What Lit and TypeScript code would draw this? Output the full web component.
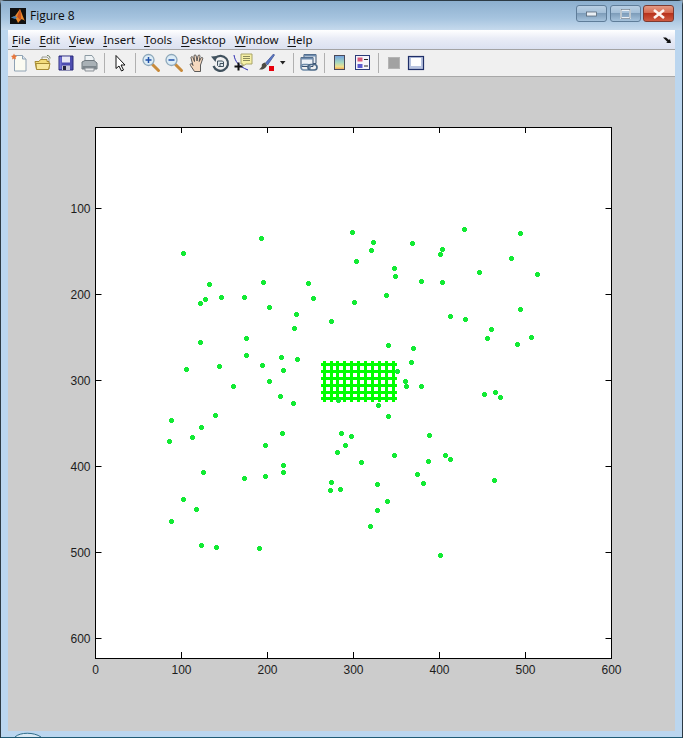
import { LitElement, html, css, svg } from "lit";
import { customElement } from "lit/decorators.js";

const A: [number, number][] = [[70,85],[304,40],[577,22],[640,52],[634,76],[589,109],[757,55],[847,73],[841,88],[703,130],[706,154],[784,169],[847,172],[913,13],[1081,25],[1054,100],[958,142],[1132,148],[148,178],[136,223],[121,235],[184,217],[253,217],[310,172],[445,175],[460,220],[328,247],[409,268],[403,310],[514,289],[583,232],[679,211],[871,274],[916,283],[1081,253],[994,313],[982,340],[1072,358],[1114,337],[121,352],[259,340],[259,391],[364,397],[412,403],[307,421],[370,436],[79,433],[178,424],[328,469],[220,484],[361,514],[685,361],[760,370],[754,412],[712,439],[736,469],[739,484],[784,484],[973,508],[1006,502],[1021,517]];
const B: [number, number][] = [[400,25],[655,31],[685,64],[535,15],[166,61],[34,76],[124,97],[97,127],[28,139],[367,115],[316,151],[544,115],[574,124],[556,151],[532,172],[604,202],[703,181],[808,121],[856,181],[871,193],[805,199],[370,211],[370,232],[316,244],[253,250],[130,232],[514,262],[511,286],[541,283],[652,268],[772,238],[790,265],[1003,256],[70,313],[109,343],[34,379],[682,319],[652,346],[631,394],[124,451],[169,457],[298,460],[841,481]];

const pts: [number, number][] = [
  ...A.map(([x, y]): [number, number] => [Math.round(x / 3 + 160), Math.round(y / 3 + 225)]),
  ...B.map(([x, y]): [number, number] => [Math.round(x / 3 + 160), Math.round(y / 3 + 395)]),
];
const grid: [number, number][] = [];
for (let i = 0; i < 11; i++) for (let j = 0; j < 6; j++) grid.push([Math.round(323.6 + i * 6.9), Math.round(364 + j * 6.88)]);

const marker = (x: number, y: number, c: string) =>
  svg`<path d="M${x - 1} ${y - 2}h3v1h1v3h-1v1h-3v-1h-1v-3h1z" fill=${c}/>`;
const gridMarker = (x: number, y: number) =>
  svg`<path d="M${x - 1} ${y - 3}h3v2h2v3h-2v2h-3v-2h-2v-3h2z" fill="#00ff00"/>`;

const xt = [95, 181, 267, 353, 439, 525, 611];
const yt: [number, string][] = [[208, "100"], [294, "200"], [380, "300"], [466, "400"], [552, "500"], [638, "600"]];

type Icon = { w: number; d?: unknown };
const ic = (d: unknown) => html`<svg class="ic" viewBox="0 0 20 20" width="20" height="20">${d}</svg>`;

const icons: Record<string, unknown> = {
  new: svg`<path d="M4.5 2.5h8l3.5 3.5v12H4.500z" fill="#fbfbf2" stroke="#8fa2b4"/><path d="M12.500 2.500v3.500H16" fill="#dfe6ee" stroke="#8fa2b4"/><path d="M4 0.500l1 2 2 .5-1.500 1.500.5 2-2-1-2 1 .5-2L1 3l2-.5z" fill="#e8763a"/>`,
  open: svg`<path d="M9 4h5l2 2v5H9z" fill="#f2f2ea" stroke="#9a9a90"/><path d="M2 8.500h4l1.500-2H14v2h2v7.500H3.500z" fill="#f2dc7a" stroke="#a58b33"/><path d="M3 10.500h14l-1.500 6H3.500z" fill="#f8e89a" stroke="#a58b33"/><path d="M14 2.500c2 0 3 1 3 3" fill="none" stroke="#6a7a5a"/>`,
  save: svg`<path d="M3 3h14v14H3z" fill="#4d4db0" stroke="#2a2a78"/><path d="M6 3.500h8v6H6z" fill="#e8e8f4"/><path d="M6 12.500h8v4.500H6z" fill="#c8c8d8"/><path d="M7 13h3v4H7z" fill="#24243c"/><path d="M3.500 4h2v12h-2z" fill="#7070d0"/>`,
  print: svg`<path d="M6 2.500h7l2 3v4H6z" fill="#eef2f4" stroke="#8c9aa2"/><path d="M3 9l3-1.500h9l3 2.500v6H3z" fill="#a9b1b6" stroke="#6f787e"/><path d="M3.500 13h14v3H3.500z" fill="#7c858b"/><path d="M6 15h9v3H6z" fill="#e4e6e8" stroke="#8a9096"/>`,
  arrow: svg`<path d="M6 2.500v13l3-2.500 2.500 5 2-1-2.500-5h4z" fill="#fff" stroke="#111" stroke-width="1"/>`,
  zin: svg`<path d="M11.500 11.500l6 6" stroke="#c88a3a" stroke-width="3" stroke-linecap="round"/><circle cx="7.500" cy="7" r="5.500" fill="#dcecf6" stroke="#8ea8ba" stroke-width="1.300"/><path d="M4.500 7h6M7.500 4v6" stroke="#1f4fa8" stroke-width="1.500"/>`,
  zout: svg`<path d="M11.500 11.500l6 6" stroke="#c88a3a" stroke-width="3" stroke-linecap="round"/><circle cx="7.500" cy="7" r="5.500" fill="#dcecf6" stroke="#8ea8ba" stroke-width="1.300"/><path d="M4.500 7h6" stroke="#1f4fa8" stroke-width="1.500"/>`,
  hand: svg`<path d="M7.500 18.500l-4-6c-1-1.500 .5-2.500 1.500-1.500l1 1.500L4 5c-.4-1.500 1.400-2 2-.5l1.500 4L7 3c0-1.500 2-1.500 2.200 0l.8 5 1-5c.3-1.500 2.200-1.200 2 .3l-.8 5.200 1.800-3.500c.7-1.200 2.300-.5 1.700.8l-2.200 6.200v6.500z" fill="#f6d9bf" stroke="#4a4a4a" stroke-width=".9"/>`,
  rot: svg`<path d="M5 5.200A7.500 7.500 0 1 1 3.500 13" fill="none" stroke="#41525e" stroke-width="2.200"/><path d="M1 3.500l6-.5-1.500 6z" fill="#41525e"/><path d="M7.500 8h5l1 1v4.500h-5l-1-1z" fill="#dfe7ec" stroke="#41525e"/><path d="M10 10.500h3.500M10 10.500v3" stroke="#41525e"/>`,
  cursor: svg`<path d="M1 2c1 6 4 11 14 15" fill="none" stroke="#2a2ab0" stroke-width="1"/><path d="M8 1h11v10h-6l-3 2V11H8z" fill="#f6f0a6" stroke="#a8a468"/><path d="M10 3.500h7M10 5.500h7M10 7.500h7" stroke="#8a8a5a"/><path d="M1.500 13.500h8M5.500 9.500v8" stroke="#111" stroke-width="2"/>`,
  brush: svg`<path d="M17.500 1L9.500 10l2 2L18.500 2z" fill="#5878c8" stroke="#3a4a88" stroke-width=".7"/><path d="M9 9.500c-3 .5-4 3-3 3.500-1 2-3 3.500-3 3.500 3 .5 6-.5 8-4z" fill="#4c4c44"/><rect x="13" y="13" width="5" height="5" fill="#e8000c"/>`,
  drop: svg`<path d="M7 8h5.500L9.700 11.500z" fill="#222"/>`,
  link: svg`<path d="M5 1.500h12v9H5z" fill="#e7edf4" stroke="#39506e"/><path d="M5 1.500h12v2H5z" fill="#6e8cae"/><path d="M2 4.500h12v9H2z" fill="#eef2f7" stroke="#39506e"/><path d="M2 4.500h12v2H2z" fill="#6e8cae"/><rect x="2" y="11.500" width="9" height="5.500" rx="2.700" fill="none" stroke="#6d8aa8" stroke-width="1.700"/><rect x="9" y="11.500" width="9" height="5.500" rx="2.700" fill="none" stroke="#4b6886" stroke-width="1.700"/>`,
  cbar: svg`<defs><linearGradient id="cb" x1="0" y1="0" x2="0" y2="1"><stop offset="0" stop-color="#6f9fe0"/><stop offset=".5" stop-color="#a6d8c0"/><stop offset=".8" stop-color="#f2e08a"/><stop offset="1" stop-color="#f0a050"/></linearGradient></defs><rect x="4.500" y="2.500" width="10" height="14" fill="url(#cb)" stroke="#4a4a5a"/>`,
  legend: svg`<rect x="2.500" y="2.500" width="14" height="14" fill="#f4f4fa" stroke="#2a3a78"/><rect x="4.500" y="4.500" width="5" height="4" fill="#d85a7a"/><rect x="4.500" y="11" width="5" height="4" fill="#5a5ad0"/><path d="M11 6.500h4M11 13h4" stroke="#222" stroke-width="1.200"/>`,
  square: svg`<rect x="4.500" y="4.500" width="11" height="11" fill="#a2a2a2" stroke="#b4b4b4"/>`,
  frame: svg`<rect x="1.500" y="3.500" width="15" height="13" fill="#b8c4e0" stroke="#1f2f68" stroke-width="1.200"/><rect x="4" y="5" width="10" height="8" fill="#fff"/>`,
};

type Slot = [string, string];
const slots: Slot[] = [
  ["n", "new"], ["n", "open"], ["n", "save"], ["n", "print"], ["s", ""],
  ["a", "arrow"], ["s2", ""],
  ["n", "zin"], ["n", "zout"], ["n", "hand"], ["n", "rot"], ["n", "cursor"], ["n", "brush"], ["d", "drop"], ["s", ""],
  ["n", "link"], ["s", ""], ["n", "cbar"], ["n", "legend"], ["s", ""], ["n", "square"], ["n", "frame"],
];

const menus: [string, string][] = [["F", "ile"], ["E", "dit"], ["V", "iew"], ["I", "nsert"], ["T", "ools"], ["D", "esktop"], ["W", "indow"], ["H", "elp"]];

@customElement("app-root")
export class AppRoot extends LitElement {
  static styles = css`
    :host { display: block; width: 683px; height: 738px; overflow: hidden; background: #7f8f9c; }
    .win { height: 738px; box-sizing: border-box; display: flex; flex-direction: column;
      border: 1px solid #2c3a44; border-bottom: 0; border-radius: 5px 5px 0 0;
      background: #bbd6ef; }
    .title { height: 29px; flex: none; display: flex; align-items: center; padding-left: 9px; position: relative;
      background: linear-gradient(to bottom, #8cafce 0, #a6c4df 60%, #c6daed 100%); }
    .title-text { font: 12px "Open Sans", "Liberation Sans", sans-serif; color: #0c0c0c; margin-left: 4px; margin-top: -1px; }
    .wbtns { margin-left: auto; display: flex; gap: 2px; margin-right: 8px; margin-top: -4px; }
    .wb { width: 31px; height: 17px; box-sizing: border-box; border: 1px solid #5f7d99; border-radius: 3px;
      display: flex; align-items: center; justify-content: center;
      background: linear-gradient(to bottom, #b9cfe3 0, #a4bfd8 45%, #7e9dba 50%, #a5c2dc 100%); }
    .wb.max { margin-left: 1px; }
    .wb.close { background: linear-gradient(to bottom, #e49a84 0, #d66a50 45%, #b8321c 50%, #cf5a40 100%); border-color: #7c3a30; }
    .body { flex: 1; margin: 0 7px; display: flex; flex-direction: column; min-height: 0; }
    .menu { height: 19px; flex: none; border-bottom: 1px solid #a3a3a3; display: flex; align-items: center; gap: 9px;
      padding-left: 4px; padding-right: 3px;
      background: linear-gradient(to bottom, #ffffff 0, #e9ecf6 45%, #dbe1f0 100%);
      font: 11.500px "Noto Sans", "DejaVu Sans", sans-serif; color: #111; }
    .menu u { text-decoration-thickness: 1px; text-underline-offset: 2px; }
    .menu-end { margin-left: auto; display: block; }
    .tools { height: 26px; flex: none; border-bottom: 1px solid #a8a8a8; background: #f0f0f0; display: flex; align-items: center; padding-left: -1px; margin: 0; }
    .slot { display: flex; align-items: center; justify-content: center; flex: none; height: 26px; }
    .n { width: 23px; }
    .a { width: 24px; }
    .d { width: 12px; }
    .s { width: 8px; }
    .s2 { width: 7px; }
    .s::after, .s2::after { content: ""; width: 1px; height: 20px; background: #b0b0b0; }
    .ic { display: block; flex: none; }
    .fig { flex: 1; background: #cccccc; min-height: 0; overflow: hidden; }
    .plot { display: block; }
    .plot text { font: 12px "Liberation Sans", Arial, sans-serif; fill: #1c1c1c; }
    .foot { height: 7px; flex: none; border-bottom: 1px solid #1f5a74; box-sizing: border-box; }
    .orb { display: block; margin-left: 13px; margin-top: 0; }
  `;

  render() {
    return html`
      <div class="win">
        <div class="title">
          <svg class="ic" viewBox="0 0 16 16" width="16" height="16">
            <rect width="16" height="16" fill="#101010"/>
            <path d="M1 9.500l4-1.500 5-7c1 2 3 8 5 12-1.500-1-3-2-4-1.500L8 15c-1-2.500-2-4.500-3-5z" fill="#e8892c"/>
            <path d="M1 9.500l4-1.500 2 1.500L5 11z" fill="#3f7fb5"/>
            <path d="M10 1c1 3 1 7 1 11.500C9.500 11 8 9.500 7 9z" fill="#c9531f"/>
          </svg>
          <span class="title-text">Figure 8</span>
          <div class="wbtns">
            <div class="wb"><svg viewBox="0 0 12 6" width="12" height="6"><rect x=".5" y="1" width="10" height="4" fill="#e9eff5" stroke="#4a5a6a" stroke-width=".7"/></svg></div>
            <div class="wb max"><svg viewBox="0 0 12 10" width="12" height="10"><rect x="1" y="1" width="9" height="8" fill="none" stroke="#e9eff5" stroke-width="2"/><rect x="1" y=".5" width="9" height="9" fill="none" stroke="#3f4f5f" stroke-width=".5"/></svg></div>
            <div class="wb close"><svg viewBox="0 0 14 10" width="14" height="10"><path d="M2 1l10 8M12 1L2 9" stroke="#fdf4f0" stroke-width="2.600"/></svg></div>
          </div>
        </div>
        <div class="body">
          <div class="menu">
            ${menus.map(([a, b]) => html`<span><u>${a}</u>${b}</span>`)}
            <svg class="menu-end" viewBox="0 0 9 8" width="9" height="8"><path d="M0 1.500h3l3 2.500 1-1 1 4H3l1.500-1z" fill="#111"/></svg>
          </div>
          <div class="tools">
            ${slots.map(([k, name]) => html`<div class="slot ${k}">${name ? ic(icons[name]) : ""}</div>`)}
          </div>
          <div class="fig">
            <svg class="plot" width="667" height="654" viewBox="8 77 667 654">
              <rect x="95.500" y="127.500" width="516" height="531" fill="#fff" stroke="#000" stroke-width="1"/>
              ${xt.map((x, i) => svg`
                <path d="M${x + 0.5} 658V652M${x + 0.5} 127.500V133" stroke="#000" fill="none"/>
                <text x=${x + 0.5} y="674" text-anchor="middle">${i * 100}</text>`)}
              ${yt.map(([y, t]) => svg`
                <path d="M96 ${y + 0.5}H101.500M611 ${y + 0.5}H605.500" stroke="#000" fill="none"/>
                <text x="90.500" y=${y + 5} text-anchor="end">${t}</text>`)}
              ${grid.map(([x, y]) => gridMarker(x, y))}
              ${pts.map(([x, y]) => marker(x, y, "#12ea34"))}
            </svg>
          </div>
        </div>
        <div class="foot">
          <svg class="orb" width="28" height="6" viewBox="0 0 28 6"><path d="M1 6C6 1 20 1 27 6" fill="#d8e8f4" stroke="#2d6b88"/></svg>
        </div>
      </div>
    `;
  }
}
